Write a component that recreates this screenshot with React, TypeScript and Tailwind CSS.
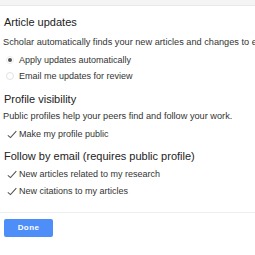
import React from "react";

const Check = () => (
  <svg width="10" height="9" viewBox="0 0 10 9" className="shrink-0">
    <path d="M0.8 5.3 L3.5 7.6 L9.3 1.2" fill="none" stroke="#555" strokeWidth="1.1" />
  </svg>
);

export default function App() {
  return (
    <div className="w-[255px] h-[255px] bg-white overflow-hidden text-[#222]" style={{ fontFamily: '"Liberation Sans", Arial, sans-serif' }}>
      <div className="h-[6px] bg-[#f4f4f4] border-b border-[#e8e8e8]" />
      <div className="pl-[4px] pt-[9px]">
        <div className="text-[11px] leading-[14px] whitespace-nowrap">Article updates</div>
        <div className="mt-[7px] text-[9.2px] leading-[12px] text-[#333] whitespace-nowrap -ml-[1px]">Scholar automatically finds your new articles and changes to existing ones.</div>
        <div className="mt-[6px] flex items-center h-[12px]">
          <span className="ml-[2px] w-[8px] h-[8px] rounded-full border border-[#eee] flex items-center justify-center">
            <span className="w-[4px] h-[4px] rounded-full bg-[#555]" />
          </span>
          <span className="ml-[5px] text-[9px] leading-[12px] text-[#333] whitespace-nowrap">Apply updates automatically</span>
        </div>
        <div className="mt-[4px] flex items-center h-[12px]">
          <span className="ml-[2px] w-[8px] h-[8px] rounded-full border border-[#e2e2e2]" />
          <span className="ml-[5px] text-[9px] leading-[12px] text-[#333] whitespace-nowrap">Email me updates for review</span>
        </div>
        <div className="mt-[10px] text-[11px] leading-[14px] whitespace-nowrap">Profile visibility</div>
        <div className="mt-[4px] text-[9.2px] leading-[12px] text-[#333] whitespace-nowrap -ml-[1px]">Public profiles help your peers find and follow your work.</div>
        <div className="mt-[6px] flex items-center h-[12px]">
          <span className="ml-[3px]"><Check /></span>
          <span className="ml-[2px] text-[9px] leading-[12px] text-[#333] whitespace-nowrap">Make my profile public</span>
        </div>
        <div className="mt-[9px] text-[11px] leading-[14px] whitespace-nowrap">Follow by email (requires public profile)</div>
        <div className="mt-[5px] flex items-center h-[12px]">
          <span className="ml-[3px]"><Check /></span>
          <span className="ml-[2px] text-[9px] leading-[12px] text-[#333] whitespace-nowrap">New articles related to my research</span>
        </div>
        <div className="mt-[5px] flex items-center h-[12px]">
          <span className="ml-[3px]"><Check /></span>
          <span className="ml-[2px] text-[9px] leading-[12px] text-[#333] whitespace-nowrap">New citations to my articles</span>
        </div>
      </div>
      <div className="mt-[15px] border-t border-[#eee]" />
      <div className="pl-[4px] pt-[6px]">
        <button className="w-[49px] h-[18px] rounded-[2px] bg-[#4d8ef8] text-white text-[8px] tracking-[0.4px] font-bold flex items-center justify-center">Done</button>
      </div>
    </div>
  );
}
